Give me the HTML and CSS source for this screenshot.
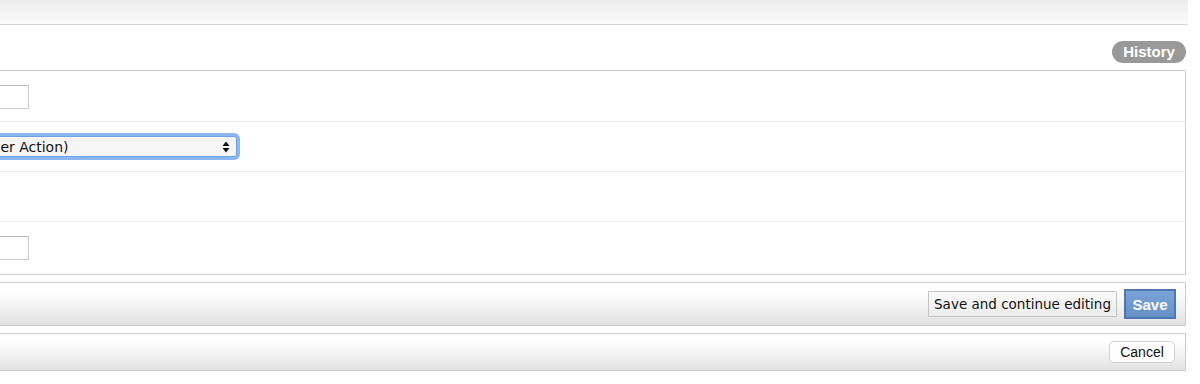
FILE: index.html
```html
<!DOCTYPE html>
<html lang="en">
<head>
	<meta charset="UTF-8">
	<title>Change action</title>
	<link rel="stylesheet" href="styles.css">
</head>
<body>

<div class="top-bar"></div>

<div id="content">
	<div class="object-tools">
		<a href="#" class="history-link">History</a>
	</div>

	<form>
		<fieldset class="module">
			<div class="form-row">
				<input type="text" class="small-input">
			</div>
			<div class="form-row">
				<div class="select-wrap focused">
					<span class="select-text">(Trigger Action)</span>
					<span class="select-arrows">
						<svg width="8" height="12" viewBox="0 0 8 12"><path d="M4 0.5 L7.5 5 L0.5 5 Z M4 11.5 L7.5 7 L0.5 7 Z" fill="#111"/></svg>
					</span>
				</div>
			</div>
			<div class="form-row"></div>
			<div class="form-row last">
				<input type="text" class="small-input">
			</div>
		</fieldset>

		<div class="submit-row">
			<button type="button" class="btn-continue">Save and continue editing</button>
			<button type="button" class="btn-save">Save</button>
		</div>

		<div class="submit-row cancel-row">
			<button type="button" class="btn-cancel">Cancel</button>
		</div>
	</form>
</div>

</body>
</html>
```

FILE: styles.css
```css
	body {
		margin: 0;
		padding: 0;
		background-color: white;
		color: #333;
		font-family: "DejaVu Sans", Verdana, sans-serif;
		font-size: 13px;
		overflow: hidden;
		}

	.top-bar {
		height: 24px;
		margin-left: -20px;
		margin-right: 12px;
		background: linear-gradient(to bottom, #ececec, #fbfbfb);
		border-bottom: 1px solid #d6d6d6; /* thin grey rule under the bar */
		}

	#content {
		margin-left: -20px; /* left side sits outside the window */
		margin-right: 14px;
		}

	.object-tools {
		display: flex;
		justify-content: flex-end;
		margin-top: 16px;
		margin-bottom: 7px;
		}

	.history-link {
		display: inline-block;
		width: 74px;
		height: 22px;
		line-height: 22px;
		text-align: center;
		border-radius: 11px;
		background-color: #999;
		color: white;
		font-family: "Liberation Sans", Arial, sans-serif;
		font-size: 15px;
		font-weight: bold;
		text-decoration: none;
		}

	.module {
		margin: 0;
		padding: 1px 0 0 0;
		border: 1px solid #ccc;
		}

	.form-row {
		display: flex;
		align-items: center;
		height: 49px;
		border-bottom: 1px solid #eee;
		}

	.form-row.last {
		height: 52px;
		border-bottom: none;
		}

	.small-input {
		width: 49px;
		height: 24px;
		box-sizing: border-box;
		margin: 0 0 0 -1px;
		border: 1px solid #ccc;
		border-top-color: #bbb;
		padding: 0;
		}

	.select-wrap {
		display: flex;
		align-items: center;
		justify-content: space-between;
		width: 281px;
		height: 21px;
		margin-left: -25px; /* start of the text is clipped */
		padding: 0 6px 0 4px;
		box-sizing: border-box;
		background-color: #f6f6f6;
		border: 1px solid #aaa;
		border-radius: 3px;
		}

	.select-wrap.focused {
		border-color: #6ea2e6;
		box-shadow: 0 0 0 3px #8cb6ef; /* focus ring */
		}

	.select-text {
		font-family: "DejaVu Sans", Verdana, sans-serif;
		font-size: 14px;
		color: #111;
		}

	.select-arrows {
		display: flex;
		align-items: center;
		}

	.submit-row {
		display: flex;
		justify-content: flex-end;
		align-items: center;
		gap: 7px;
		height: 42px;
		margin-top: 7px;
		padding-right: 9px;
		border: 1px solid #ccc;
		background: linear-gradient(to bottom, #ffffff 20%, #e2e2e2);
		}

	.cancel-row {
		height: 36px;
		padding-right: 10px;
		}

	.btn-continue {
		width: 189px;
		height: 26px;
		padding: 0;
		border: 1px solid #c2c2c2;
		border-radius: 1px;
		background: linear-gradient(to bottom, #fafafa, #ececec);
		color: #111;
		font-family: "DejaVu Sans", Verdana, sans-serif;
		font-size: 13.5px;
		cursor: pointer;
		}

	.btn-save {
		width: 52px;
		height: 30px;
		padding: 0;
		border: 2px solid #4d77b2;
		background: linear-gradient(to bottom, #7ba3d6, #6690c8);
		color: white;
		font-family: "Liberation Sans", Arial, sans-serif;
		font-size: 15px;
		font-weight: bold;
		cursor: pointer;
		}

	.btn-cancel {
		width: 66px;
		height: 22px;
		padding: 0;
		border: 1px solid #cfcfcf;
		border-radius: 5px;
		background-color: white;
		color: #111;
		font-family: "Liberation Sans", Arial, sans-serif;
		font-size: 14px;
		cursor: pointer;
		}
```
